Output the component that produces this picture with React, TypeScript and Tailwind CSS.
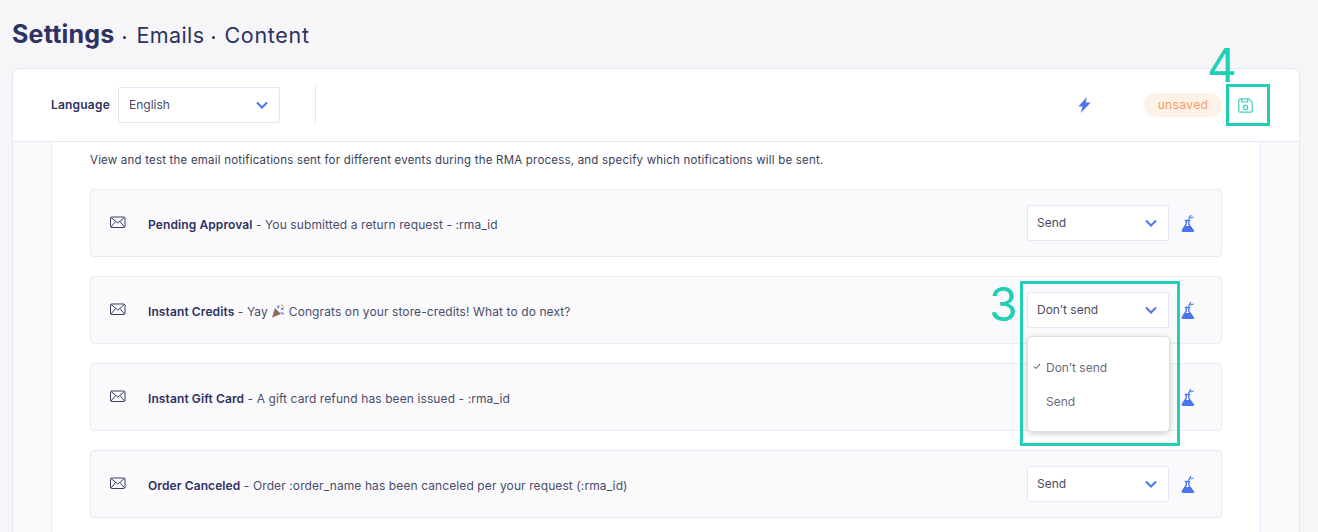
import React from 'react';

const font = "font-['Inter','Noto_Sans',sans-serif]";

const ChevronIcon = () => (
  <svg width="12" height="8" viewBox="0 0 12 8" fill="none" className="shrink-0">
    <path d="M1 1.500 6 6.500 11 1.500" stroke="#4b74f1" strokeWidth="2" />
  </svg>
);

const MailIcon = () => (
  <svg width="16" height="13" viewBox="0 0 16 13" fill="none" stroke="#3a3f68" strokeWidth="1" className="shrink-0">
    <rect x="0.5" y="1" width="14.500" height="10.500" rx="1.200" />
    <path d="M1 1.500 7.750 7 14.500 1.500M1 11 5.600 5.500M14.500 11 9.900 5.500" />
  </svg>
);

const FlaskIcon = () => (
  <svg width="14" height="18" viewBox="0 0 14 18" className="shrink-0">
    <path d="M3.800 6.500h5.400M5.200 6.500v3.600L1.500 16h10L7.800 10.100V6.500" fill="none" stroke="#4b74f1" strokeWidth="1.400" />
    <path d="M3.300 12h6.400L13 16.500a1 1 0 0 1-.8 1.500H1.800a1 1 0 0 1-.8-1.500z" fill="#4b74f1" />
    <path d="M7.500 5.500 10 1M9.500 4 12.500 3" fill="none" stroke="#4b74f1" strokeWidth="1.300" />
  </svg>
);

const BoltIcon = () => (
  <svg width="13" height="16" viewBox="0 0 13 16">
    <path d="M8.800 0 .3 9.400h4.300L2.700 16 12.700 5.600H7.800z" fill="#4b74f1" />
  </svg>
);

const SaveIcon = () => (
  <svg width="15" height="15" viewBox="0 0 15 15" fill="none" stroke="#3ed3bd" strokeWidth="1.200">
    <path d="M2 .8h8.700l3.500 3.500V13a1.200 1.200 0 0 1-1.200 1.200H2A1.200 1.200 0 0 1 .8 13V2A1.200 1.200 0 0 1 2 .8z" />
    <path d="M3.600 1v3h6V1" />
    <circle cx="7.500" cy="9.500" r="2.100" />
  </svg>
);

const PartyIcon = () => (
  <svg width="14" height="14" viewBox="0 0 14 14" className="shrink-0">
    <path d="M4 4 10 10 1 13.500z" fill="#8a6a5a" />
    <path d="M3.500 9 5 10.500 3 11.500z" fill="#e4574c" />
    <path d="M6 2 7 5 9 1.500zM9 5l4-2-1 3zM9 8l4 1-1 2z" fill="#5a7fc8" />
    <circle cx="11" cy="1.500" r="1" fill="#e8a33d" />
  </svg>
);

const Select = ({ label, className }: { label: string; className: string }) => (
  <div className={`${className} h-[36px] flex items-center justify-between bg-white border border-[#e4e7f6] rounded-[2px] pr-[11px] shrink-0`}>
    <span className="text-[12px] text-[#4a4c66]">{label}</span>
    <ChevronIcon />
  </div>
);

type Row = {
  title: string;
  rest: React.ReactNode;
  value: string;
};

const rows: Row[] = [
  { title: 'Pending Approval', rest: ' - You submitted a return request - :rma_id', value: 'Send' },
  {
    title: 'Instant Credits',
    rest: (
      <>
        {' - Yay '}
        <span className="inline-block align-[-2px]">
          <PartyIcon />
        </span>
        {' Congrats on your store-credits! What to do next?'}
      </>
    ),
    value: 'Don’t send',
  },
  // its select sits under the open menu, so no label shows
  { title: 'Instant Gift Card', rest: ' - A gift card refund has been issued - :rma_id', value: '' },
  { title: 'Order Canceled', rest: ' - Order :order_name has been canceled per your request (:rma_id)', value: 'Send' },
];

export default function App() {
  return (
    <div className={`relative h-[532px] w-[1318px] overflow-hidden bg-[#f6f6f8] ${font}`}>
      <div className="px-[12px] pt-[19px]">
        <h1 className="flex items-center h-[32px] text-[#2d3163]">
          <span className="text-[25px] font-bold tracking-[0.2px]">Settings</span>
          <span className="w-[3px] h-[3px] rounded-full bg-[#2d3163] ml-[9px] mr-[10px] mt-[5px]" />
          <span className="text-[21.500px] tracking-[0.4px] font-normal mt-[1px]">Emails</span>
          <span className="w-[3px] h-[3px] rounded-full bg-[#2d3163] ml-[8px] mr-[9px] mt-[5px]" />
          <span className="text-[21.500px] tracking-[0.7px] font-normal mt-[1px]">Content</span>
        </h1>

        <div className="mt-[17px] w-[1288px] h-[600px] bg-[#fafafd] border border-[#e4e7f6] rounded-[8px]">
          <div className="h-[73px] bg-white rounded-t-[8px] border-b border-[#e4e7f6] flex items-center pl-[38px] pr-[46px]">
            <span className="text-[12px] font-semibold text-[#2d3163] tracking-[0.2px] mr-[8px]">Language</span>
            <Select label="English" className="w-[162px] pl-[10px]" />
            <div className="w-px h-[38px] bg-[#e4e7f6] ml-[35px]" />
            <div className="ml-auto flex items-center">
              <BoltIcon />
              <span className="ml-[53px] w-[78px] h-[24px] rounded-full bg-[#fdf1e8] flex items-center justify-center text-[12px] tracking-[0.4px] text-[#f3a064]">
                unsaved
              </span>
              <span className="ml-[16px] w-[15px] flex">
                <SaveIcon />
              </span>
            </div>
          </div>

          <div className="ml-[38px] w-[1210px] h-full bg-white border-l border-r border-[#e8eafa] px-[38px] pt-[10px]">
            <p className="text-[11.500px] leading-[16px] tracking-[0.2px] text-[#3c3e58]">
              View and test the email notifications sent for different events during the RMA process, and specify which notifications will be sent.
            </p>
            <div className="mt-[21px] flex flex-col gap-[19px]">
              {rows.map((row) => (
                <div
                  key={row.title}
                  className="h-[68px] w-[1132px] bg-[#fafafc] border border-[#e8eaf6] rounded-[4px] flex items-center pl-[19px] pr-[26px]"
                >
                  <span className="mb-[2px] flex">
                    <MailIcon />
                  </span>
                  <p className="ml-[22px] mt-[3px] text-[12px] tracking-[0.1px] text-[#4a4c6a] truncate">
                    <span className="font-semibold text-[#2d3163]">{row.title}</span>
                    {row.rest}
                  </p>
                  <div className="ml-auto flex items-center">
                    <Select label={row.value} className="w-[142px] pl-[9px]" />
                    <span className="ml-[12px] mb-[1px] flex">
                      <FlaskIcon />
                    </span>
                  </div>
                </div>
              ))}
            </div>
          </div>
        </div>
      </div>

      {/* open dropdown */}
      <div className="absolute left-[1027px] top-[336px] w-[143px] h-[96px] bg-white border border-[#dedfe6] rounded-[5px] shadow-[0_2px_6px_rgba(0,0,0,0.18)] text-[12px] text-[#6a6b7c]">
        <div className="absolute left-[18px] top-[23px] leading-[16px]">Don’t send</div>
        <div className="absolute left-[18px] top-[57px] leading-[16px]">Send</div>
        <svg width="8" height="7" viewBox="0 0 8 7" fill="none" className="absolute left-[5px] top-[26px]">
          <path d="M1 3.500 3 5.500 7 1" stroke="#3a3c50" strokeWidth="1" />
        </svg>
      </div>

      {/* annotations */}
      <div className="absolute left-[1020px] top-[281px] w-[160px] h-[165px] border-[3px] border-[#20cfb4]" />
      <div className="absolute left-[1226px] top-[84px] w-[44px] h-[42px] border-[3px] border-[#20cfb4]" />
      <div className="absolute left-[989px] top-[279px] text-[46px] leading-[50px] font-normal text-[#20cfb4]">3</div>
      <div className="absolute left-[1207px] top-[40px] text-[46px] leading-[50px] font-normal text-[#20cfb4]">4</div>
    </div>
  );
}
